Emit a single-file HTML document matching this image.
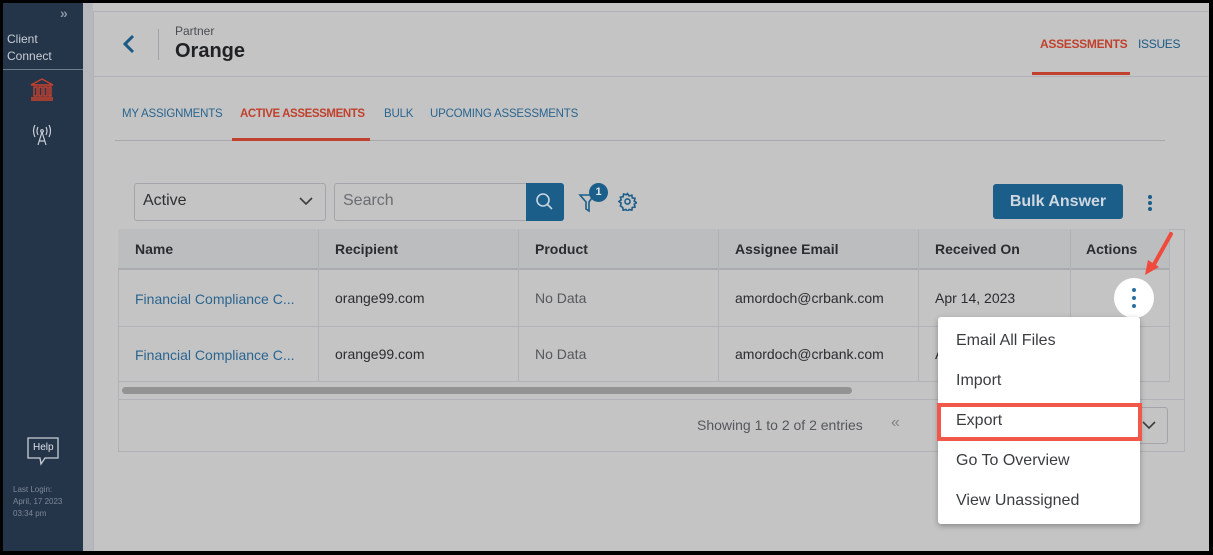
<!DOCTYPE html>
<html><head><meta charset="utf-8"><style>
*{box-sizing:border-box;margin:0;padding:0}
body{width:1213px;height:555px;background:#000;position:relative;overflow:hidden;font-family:"Liberation Sans",sans-serif}
.a{position:absolute}
.t{position:absolute;white-space:nowrap}
.tab{font-size:11.5px;letter-spacing:-0.2px}
</style></head><body>
<div class="a" style="left:3px;top:3px;width:1206px;height:548px;background:#c4c4c4"></div>
<div class="a" style="left:3px;top:3px;width:80px;height:548px;background:#243449"></div>
<div class="t" style="left:60px;top:5px;color:#8a95a3;font-size:14px;font-weight:bold">»</div>
<div class="t" style="left:7px;top:31px;color:#c9ced4;font-size:12px;line-height:17px">Client<br>Connect</div>
<div class="a" style="left:3px;top:69px;width:80px;height:1px;background:#6f7c8b"></div>
<svg class="a" style="left:29px;top:77px" width="26" height="25" viewBox="0 0 26 25" fill="none" stroke="#c9412e" stroke-width="1.4"><path d="M2 8 L13 2 L24 8 Z"/><rect x="5" y="10" width="3" height="9"/><rect x="10" y="10" width="3" height="9"/><rect x="15" y="10" width="3" height="9"/><rect x="20" y="10" width="2" height="9"/><path d="M2 21h22M2 23h22"/></svg>
<svg class="a" style="left:30px;top:122px" width="24" height="24" viewBox="0 0 24 24" fill="none" stroke="#c9ced4" stroke-width="1.2"><path d="M12 10 L8 23 M12 10 L16 23 M9 19h6"/><circle cx="12" cy="9" r="1.3"/><path d="M8 5 Q6 9 8 13 M16 5 Q18 9 16 13 M5 3 Q2 9 5 15 M19 3 Q22 9 19 15"/></svg>
<svg class="a" style="left:26px;top:436px" width="34" height="32" viewBox="0 0 34 32" fill="none" stroke="#c9ced4" stroke-width="1.3"><path d="M2 2h30v20H19l-4 6-1-6H2z"/></svg>
<div class="t" style="left:33px;top:442px;color:#dde1e6;font-size:10px">Help</div>
<div class="t" style="left:13px;top:484px;color:#7e8998;font-size:8px;line-height:12px">Last Login:<br>April, 17 2023<br>03:34 pm</div>
<div class="a" style="left:83px;top:3px;width:10px;height:548px;background:#b6b8bb"></div>
<div class="a" style="left:93px;top:11px;width:1116px;height:540px;background:#c4c4c4;border-left:1px solid #b0b2b5;border-top:1px solid #b0b2b5"></div>
<div class="a" style="left:93px;top:76px;width:1116px;height:1px;background:#b0b2b5"></div>
<svg class="a" style="left:122px;top:34px" width="14" height="20" viewBox="0 0 14 20" fill="none" stroke="#1b5a85" stroke-width="3"><path d="M11 2 L3 10 L11 18"/></svg>
<div class="a" style="left:158px;top:29px;width:1px;height:31px;background:#a0a2a5"></div>
<div class="t" style="left:175px;top:24px;font-size:12px;color:#4a4d51">Partner</div>
<div class="t" style="left:175px;top:40px;font-size:20px;font-weight:bold;color:#1f2124">Orange</div>
<div class="t" style="left:1040px;top:37px;font-size:12px;font-weight:bold;color:#c0412d;letter-spacing:-0.3px">ASSESSMENTS</div>
<div class="a" style="left:1032px;top:72px;width:98px;height:3px;background:#c0412d"></div>
<div class="t" style="left:1138px;top:37px;font-size:12px;color:#1b5a85;letter-spacing:-0.3px">ISSUES</div>
<div class="t tab" style="left:122px;top:108px;color:#2a6590">MY ASSIGNMENTS</div>
<div class="t tab" style="left:240px;top:108px;font-weight:bold;color:#c0412d;letter-spacing:-0.4px">ACTIVE ASSESSMENTS</div>
<div class="t tab" style="left:384px;top:108px;color:#2a6590">BULK</div>
<div class="t tab" style="left:430px;top:108px;color:#2a6590">UPCOMING ASSESSMENTS</div>
<div class="a" style="left:115px;top:140px;width:1050px;height:1px;background:#a6a8ab"></div>
<div class="a" style="left:232px;top:138px;width:138px;height:3px;background:#c0412d"></div>
<div class="a" style="left:134px;top:183px;width:192px;height:38px;border:1px solid #a3a5a8;border-radius:3px"></div>
<div class="t" style="left:143px;top:192px;font-size:16px;color:#2d3033">Active</div>
<svg class="a" style="left:298px;top:195px" width="16" height="12" viewBox="0 0 16 12" fill="none" stroke="#3a3d40" stroke-width="1.6"><path d="M2 3 L8 9 L14 3"/></svg>
<div class="a" style="left:334px;top:183px;width:194px;height:38px;border:1px solid #a3a5a8;border-radius:3px 0 0 3px"></div>
<div class="t" style="left:343px;top:192px;font-size:16px;color:#6a6d71">Search</div>
<div class="a" style="left:526px;top:183px;width:38px;height:38px;background:#1b5e8a;border-radius:0 3px 3px 0"></div>
<svg class="a" style="left:535px;top:192px" width="20" height="20" viewBox="0 0 20 20" fill="none" stroke="#c8d4de" stroke-width="1.6"><circle cx="8" cy="8" r="6"/><path d="M12.5 12.5 L17 17"/></svg>
<svg class="a" style="left:578px;top:190px" width="20" height="24" viewBox="0 0 20 24" fill="none" stroke="#1b5e8a" stroke-width="1.6"><path d="M2 5h14l-5 7v9l-3-2v-7z"/></svg>
<div class="a" style="left:589px;top:183px;width:19px;height:19px;border-radius:50%;background:#1b5e8a;color:#dfe6ec;font-size:11px;font-weight:bold;text-align:center;line-height:19px">1</div>
<svg class="a" style="left:618px;top:192px" width="19" height="19" viewBox="0 0 24 24" fill="none" stroke="#1b5e8a" stroke-width="2"><circle cx="12" cy="12" r="3.2"/><path d="M12 2l2 3 3.5-1 .5 3.5 3.5.5-1 3.5 3 2-3 2 1 3.5-3.5.5-.5 3.5-3.5-1-2 3-2-3-3.5 1-.5-3.5L3 17.5l1-3.5-3-2 3-2-1-3.5 3.5-.5.5-3.5 3.5 1z"/></svg>
<div class="a" style="left:993px;top:184px;width:130px;height:35px;background:#1b5e8a;border-radius:3px;color:#cfd7df;font-size:16px;font-weight:bold;text-align:center;line-height:35px">Bulk Answer</div>
<div class="a" style="left:1148px;top:195px;width:4px;height:4px;border-radius:50%;background:#1b5e8a"></div>
<div class="a" style="left:1148px;top:201px;width:4px;height:4px;border-radius:50%;background:#1b5e8a"></div>
<div class="a" style="left:1148px;top:207px;width:4px;height:4px;border-radius:50%;background:#1b5e8a"></div>
<div class="a" style="left:118px;top:229px;width:1067px;height:223px;border:1px solid #b0b2b5"></div>
<div class="a" style="left:118px;top:229px;width:1052px;height:41px;background:#bcbdbf;border-bottom:2px solid #a9abae"></div>
<div class="a" style="left:118px;top:326px;width:1052px;height:1px;background:#b0b2b5"></div>
<div class="a" style="left:118px;top:381px;width:1052px;height:1px;background:#b0b2b5"></div>
<div class="a" style="left:318px;top:229px;width:1px;height:153px;background:#b0b2b5"></div>
<div class="a" style="left:518px;top:229px;width:1px;height:153px;background:#b0b2b5"></div>
<div class="a" style="left:718px;top:229px;width:1px;height:153px;background:#b0b2b5"></div>
<div class="a" style="left:918px;top:229px;width:1px;height:153px;background:#b0b2b5"></div>
<div class="a" style="left:1070px;top:229px;width:1px;height:153px;background:#b0b2b5"></div>
<div class="a" style="left:1169px;top:229px;width:1px;height:153px;background:#b0b2b5"></div>
<div class="t" style="left:135px;top:241px;font-size:14px;font-weight:bold;color:#2a2c2f">Name</div>
<div class="t" style="left:335px;top:241px;font-size:14px;font-weight:bold;color:#2a2c2f">Recipient</div>
<div class="t" style="left:535px;top:241px;font-size:14px;font-weight:bold;color:#2a2c2f">Product</div>
<div class="t" style="left:735px;top:241px;font-size:14px;font-weight:bold;color:#2a2c2f">Assignee Email</div>
<div class="t" style="left:935px;top:241px;font-size:14px;font-weight:bold;color:#2a2c2f">Received On</div>
<div class="t" style="left:1086px;top:241px;font-size:14px;font-weight:bold;color:#2a2c2f">Actions</div>
<div class="t" style="left:135px;top:291px;font-size:14px;color:#2a6590">Financial Compliance C...</div>
<div class="t" style="left:335px;top:290px;font-size:14px;color:#2a2c2f">orange99.com</div>
<div class="t" style="left:535px;top:290px;font-size:14px;color:#55585c">No Data</div>
<div class="t" style="left:735px;top:290px;font-size:14px;color:#2a2c2f">amordoch@crbank.com</div>
<div class="t" style="left:935px;top:290px;font-size:14px;color:#2a2c2f">Apr 14, 2023</div>
<div class="t" style="left:135px;top:347px;font-size:14px;color:#2a6590">Financial Compliance C...</div>
<div class="t" style="left:335px;top:346px;font-size:14px;color:#2a2c2f">orange99.com</div>
<div class="t" style="left:535px;top:346px;font-size:14px;color:#55585c">No Data</div>
<div class="t" style="left:735px;top:346px;font-size:14px;color:#2a2c2f">amordoch@crbank.com</div>
<div class="t" style="left:935px;top:346px;font-size:14px;color:#2a2c2f">A</div>
<div class="a" style="left:122px;top:387px;width:730px;height:7px;border-radius:4px;background:#939393"></div>
<div class="a" style="left:118px;top:399px;width:1067px;height:1px;background:#b0b2b5"></div>
<div class="t" style="left:697px;top:417px;font-size:14px;color:#55585c">Showing 1 to 2 of 2 entries</div>
<div class="t" style="left:891px;top:414px;font-size:16px;color:#808386">«</div>
<div class="a" style="left:1130px;top:407px;width:38px;height:37px;border:1px solid #a3a5a8;border-radius:3px"></div>
<svg class="a" style="left:1141px;top:419px" width="16" height="12" viewBox="0 0 16 12" fill="none" stroke="#3a3d40" stroke-width="1.6"><path d="M2 3 L8 9 L14 3"/></svg>
<div class="a" style="left:1114px;top:278px;width:40px;height:40px;border-radius:50%;background:#fff"></div>
<div class="a" style="left:1132px;top:288px;width:4px;height:4px;border-radius:50%;background:#2a6fa0"></div>
<div class="a" style="left:1132px;top:296px;width:4px;height:4px;border-radius:50%;background:#2a6fa0"></div>
<div class="a" style="left:1132px;top:304px;width:4px;height:4px;border-radius:50%;background:#2a6fa0"></div>
<svg class="a" style="left:1140px;top:230px" width="36" height="50" viewBox="0 0 36 50"><path d="M31 4 L12 38" stroke="#f04a3c" stroke-width="4" stroke-linecap="round"/><path d="M5 45 L8 30 L19 37 Z" fill="#f04a3c"/></svg>
<div class="a" style="left:938px;top:317px;width:202px;height:207px;background:#fff;border-radius:3px;box-shadow:0 2px 6px rgba(0,0,0,.3)"></div>
<div class="t" style="left:956px;top:332px;font-size:16px;color:#3a3d40">Email All Files</div>
<div class="t" style="left:956px;top:372px;font-size:16px;color:#3a3d40">Import</div>
<div class="t" style="left:956px;top:412px;font-size:16px;color:#3a3d40">Export</div>
<div class="t" style="left:956px;top:452px;font-size:16px;color:#3a3d40">Go To Overview</div>
<div class="t" style="left:956px;top:492px;font-size:16px;color:#3a3d40">View Unassigned</div>
<div class="a" style="left:937px;top:403px;width:205px;height:38px;border:4px solid #f2584a"></div>
</body></html>
